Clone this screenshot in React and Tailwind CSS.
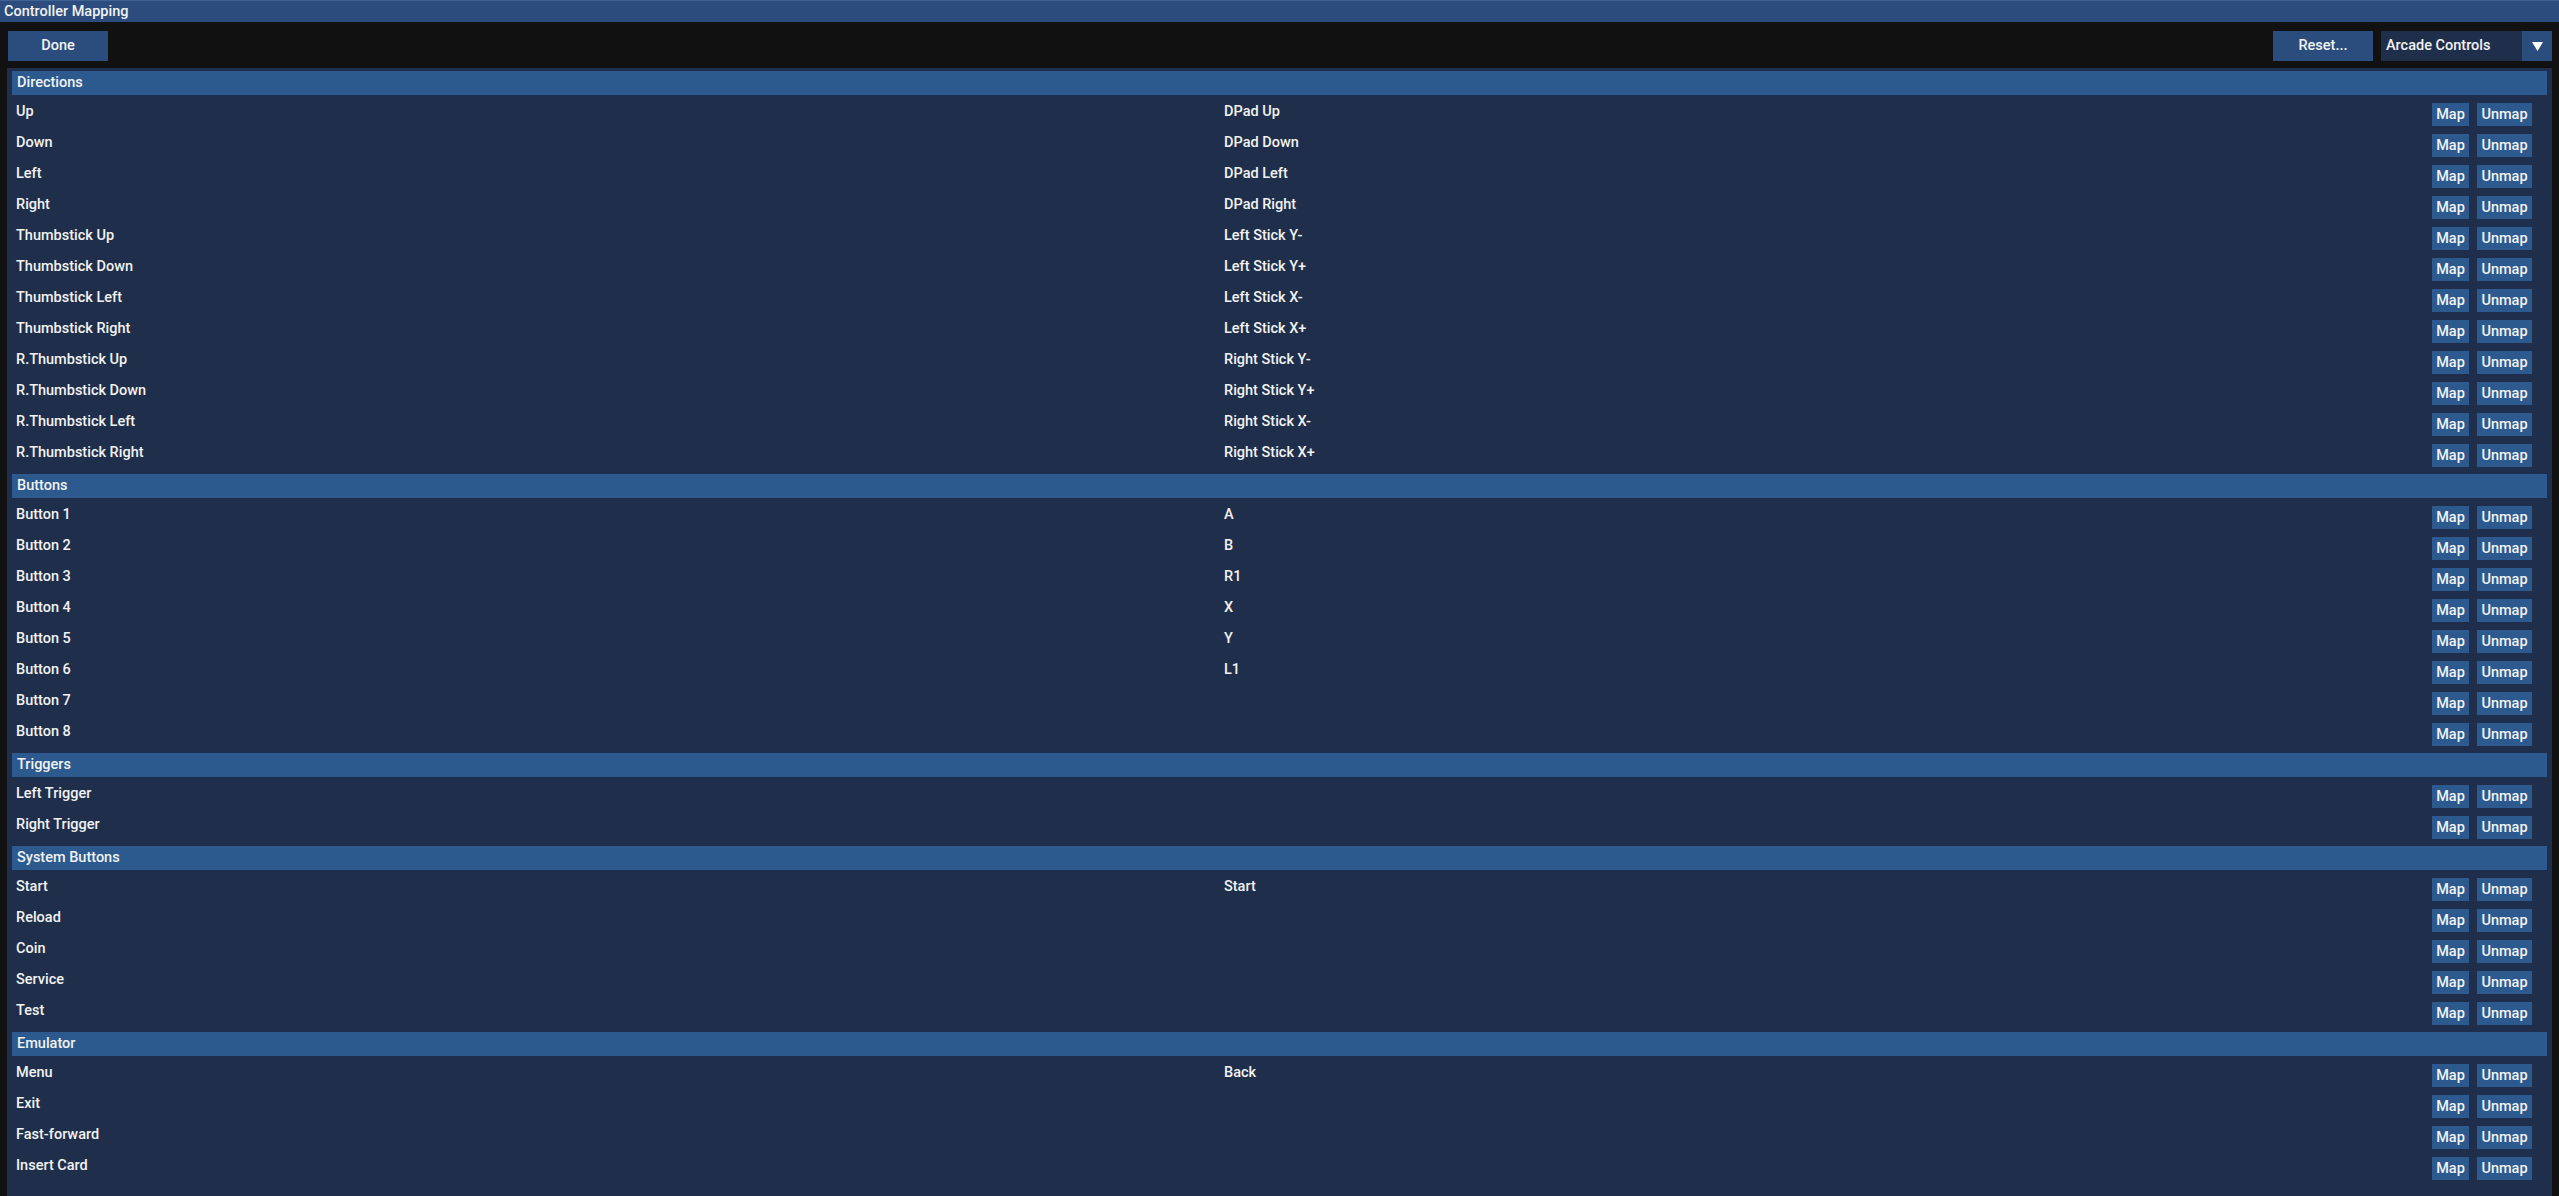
const sections = [
  {
    title: 'Directions',
    rows: [
      ['Up', 'DPad Up'],
      ['Down', 'DPad Down'],
      ['Left', 'DPad Left'],
      ['Right', 'DPad Right'],
      ['Thumbstick Up', 'Left Stick Y-'],
      ['Thumbstick Down', 'Left Stick Y+'],
      ['Thumbstick Left', 'Left Stick X-'],
      ['Thumbstick Right', 'Left Stick X+'],
      ['R.Thumbstick Up', 'Right Stick Y-'],
      ['R.Thumbstick Down', 'Right Stick Y+'],
      ['R.Thumbstick Left', 'Right Stick X-'],
      ['R.Thumbstick Right', 'Right Stick X+'],
    ],
  },
  {
    title: 'Buttons',
    rows: [
      ['Button 1', 'A'],
      ['Button 2', 'B'],
      ['Button 3', 'R1'],
      ['Button 4', 'X'],
      ['Button 5', 'Y'],
      ['Button 6', 'L1'],
      ['Button 7', ''],
      ['Button 8', ''],
    ],
  },
  {
    title: 'Triggers',
    rows: [
      ['Left Trigger', ''],
      ['Right Trigger', ''],
    ],
  },
  {
    title: 'System Buttons',
    rows: [
      ['Start', 'Start'],
      ['Reload', ''],
      ['Coin', ''],
      ['Service', ''],
      ['Test', ''],
    ],
  },
  {
    title: 'Emulator',
    rows: [
      ['Menu', 'Back'],
      ['Exit', ''],
      ['Fast-forward', ''],
      ['Insert Card', ''],
    ],
  },
]

function MappingRow({ label, value }) {
  return (
    <div className="flex h-[31px] items-center">
      <span className="w-[1212px] shrink-0 pt-[2px] pl-[4px]">{label}</span>
      <span className="flex-1 pt-[2px]">{value}</span>
      <div className="flex gap-[8px] self-stretch pt-[8px] pr-[15px]">
        <button className="h-[23px] w-[37px] bg-[#2c5a8f]">Map</button>
        <button className="h-[23px] w-[55px] bg-[#2c5a8f]">Unmap</button>
      </div>
    </div>
  )
}

function Section({ title, rows, first }) {
  return (
    <div className={first ? '' : 'mt-[7px]'}>
      <div className="flex h-[24px] items-center bg-[#2c5a8f] pl-[5px]">{title}</div>
      {rows.map(([label, value]) => (
        <MappingRow key={label} label={label} value={value} />
      ))}
    </div>
  )
}

export default function App() {
  return (
    <div
      className="flex h-[1196px] flex-col overflow-hidden bg-[#111111] text-[14.5px] font-medium text-[#f2f2f2]"
      style={{ fontFamily: 'Roboto, "Liberation Sans", sans-serif' }}
    >
      <div className="flex h-[22px] shrink-0 items-center border-t border-[#3f6295] bg-[#2b4c7d] pl-[4px]">
        Controller Mapping
      </div>

      <div className="flex h-[46px] shrink-0 items-start justify-between px-[7px] pt-[9px]">
        <button className="ml-[1px] h-[30px] w-[100px] bg-[#2a4d7e]">Done</button>
        <div className="flex gap-[8px]">
          <button className="h-[30px] w-[100px] bg-[#2a4d7e]">Reset...</button>
          <div className="flex h-[30px] w-[171px] bg-[#1f2f4b]">
            <span className="flex flex-1 items-center pl-[5px]">Arcade Controls</span>
            <span className="flex w-[30px] items-center justify-center bg-[#2a4d7e]">
              <svg width="11" height="9" viewBox="0 0 11 9">
                <path d="M0 0 H11 L5.5 9 Z" fill="#ffffff" />
              </svg>
            </span>
          </div>
        </div>
      </div>

      <div className="mx-[7px] flex-1 bg-[#1f2f4b] px-[5px] pt-[3px]">
        {sections.map((s, i) => (
          <Section key={s.title} title={s.title} rows={s.rows} first={i === 0} />
        ))}
      </div>
    </div>
  )
}
